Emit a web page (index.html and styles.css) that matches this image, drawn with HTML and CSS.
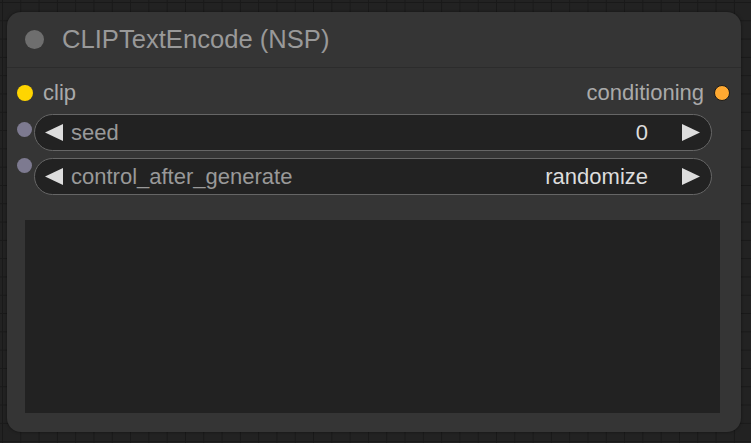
FILE: index.html
```html
<!DOCTYPE html>
<html lang="en">
  <head>
    <meta charset="UTF-8" />
    <meta name="viewport" content="width=device-width, initial-scale=1.0" />
    <title>CLIPTextEncode (NSP)</title>
    <link rel="stylesheet" href="styles.css">
  </head>
  <body>
    <div class="node">
      <div class="node-title">
        <span class="title-dot"></span>
        <span class="title-text">CLIPTextEncode (NSP)</span>
      </div>
      <div class="slots">
        <div class="slot">
          <span class="slot-dot slot-clip"></span>
          <span class="slot-label">clip</span>
        </div>
        <div class="slot">
          <span class="slot-label">conditioning</span>
          <span class="slot-dot slot-cond"></span>
        </div>
      </div>
      <div class="widget-row">
        <span class="widget-dot dot-low"></span>
        <div class="widget">
          <svg class="arrow" width="18" height="17" viewBox="0 0 18 17"><polygon points="18,0 18,17 0,8.5" /></svg>
          <span class="widget-label">seed</span>
          <span class="widget-value">0</span>
          <svg class="arrow" width="18" height="17" viewBox="0 0 18 17"><polygon points="0,0 0,17 18,8.5" /></svg>
        </div>
      </div>
      <div class="widget-row">
        <span class="widget-dot"></span>
        <div class="widget">
          <svg class="arrow" width="18" height="17" viewBox="0 0 18 17"><polygon points="18,0 18,17 0,8.5" /></svg>
          <span class="widget-label">control_after_generate</span>
          <span class="widget-value">randomize</span>
          <svg class="arrow" width="18" height="17" viewBox="0 0 18 17"><polygon points="0,0 0,17 18,8.5" /></svg>
        </div>
      </div>
      <div class="text-box"></div>
    </div>
  </body>
</html>
```

FILE: styles.css
```css
body {
  margin: 0;
  padding: 12px 0 0 7px;
  height: 443px;
  box-sizing: border-box;
  overflow: hidden;
  font-family: "Liberation Sans", Arial, sans-serif;
  background-color: #222;
  background-image:
    linear-gradient(to right, #191919 1px, transparent 1px),
    linear-gradient(to bottom, #191919 1px, transparent 1px);
  background-size: 18.3px 18.3px;
  background-position: 2px 2px;
}
.node {
  width: 734px;
  height: 420px;
  background-color: #353535;
  border-radius: 14px;
  box-shadow: 0 0 3px rgba(0, 0, 0, 0.5);
  display: flex;
  flex-direction: column;
}
.node-title {
  height: 55px;
  display: flex;
  align-items: center;
  padding-left: 18px;
  border-bottom: 1px solid #2c2c2c;
}
.title-dot {
  width: 19px;
  height: 19px;
  border-radius: 50%;
  background-color: #6e6e6e;
  margin-right: 18px;
}
.title-text {
  font-size: 25.6px;
  color: #999;
}
.slots {
  height: 36px;
  margin-top: 7px;
  display: flex;
  justify-content: space-between;
  align-items: center;
  padding: 0 11px 0 10px;
}
.slot {
  display: flex;
  align-items: center;
  gap: 10px;
}
.slot-label {
  font-size: 22px;
  color: #aaa;
}
.slot-dot {
  width: 16px;
  height: 16px;
  border-radius: 50%;
  box-sizing: border-box;
}
.slot-clip {
  background-color: #ffd500;
}
.slot-cond {
  background-color: #ffa931;
  border: 1.5px solid #1a1a1a;
}
.widget-row {
  display: flex;
  align-items: flex-start;
  padding: 0 29px 0 10px;
  margin-top: 3px;
}
.widget-row + .widget-row {
  margin-top: 7px;
}
.widget-dot {
  width: 15px;
  height: 15px;
  border-radius: 50%;
  background-color: #7d7a90;
  margin-right: 2px;
}
.dot-low {
  margin-top: 8px;
}
.widget {
  flex: 1;
  height: 37px;
  box-sizing: border-box;
  background-color: #222;
  border: 1.5px solid #666;
  border-radius: 19px;
  display: flex;
  align-items: center;
  padding: 0 11px 0 10px;
  font-size: 22px;
}
.arrow {
  fill: #ddd;
}
.widget-label {
  color: #999;
  margin-left: 8px;
  flex: 1;
}
.widget-value {
  color: #ddd;
  margin-right: 34px;
}
.text-box {
  margin: 25px 21px 0 18px;
  height: 193px;
  background-color: #222;
}
```
